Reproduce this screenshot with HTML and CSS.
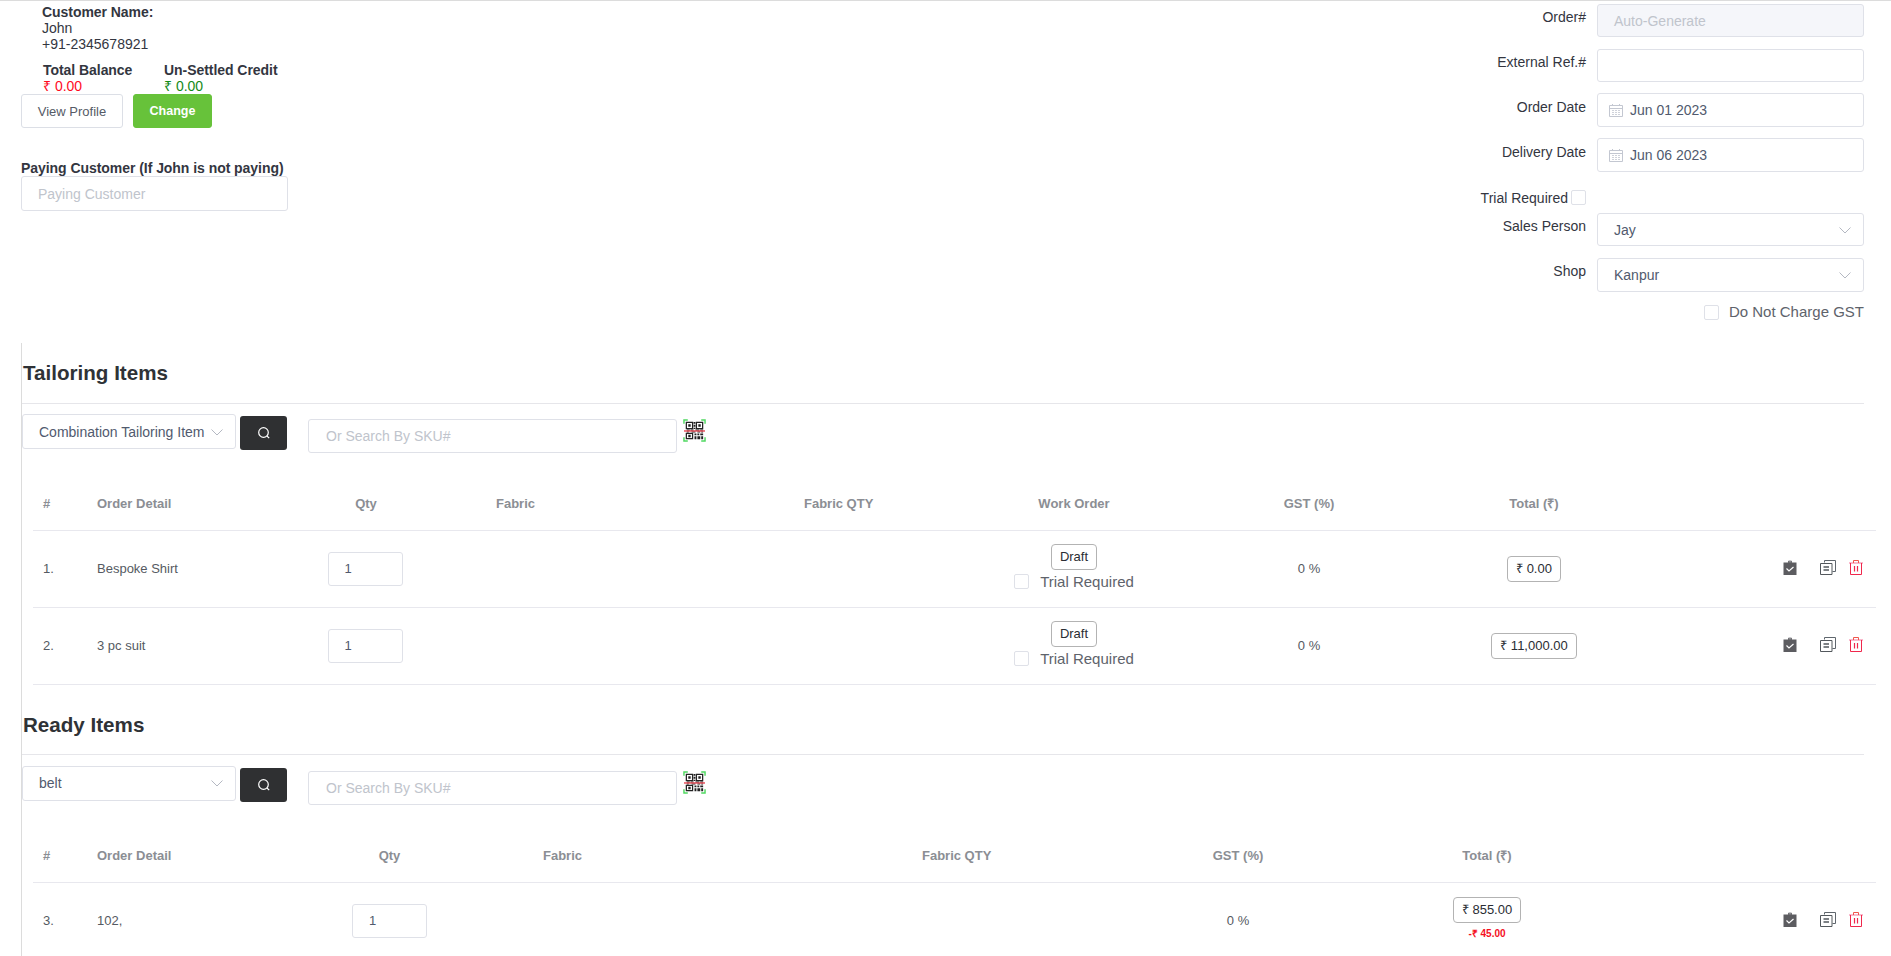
FILE: index.html
```html
<!DOCTYPE html>
<html lang="en">
<head>
<meta charset="utf-8">
<title>Order</title>
<link rel="stylesheet" href="styles.css">
</head>
<body>
<svg class="defs" width="0" height="0" aria-hidden="true">
  <symbol id="i-chev" viewBox="0 0 12 7"><path d="M.5.5 6 6l5.500-5.500" fill="none" stroke="currentColor"/></symbol>
  <symbol id="i-cal" viewBox="0 0 14 13"><path d="M.5 1.500h13v11H.5zM.5 4.500h13" fill="none" stroke="#c3c7d1"/><path d="M3.500 0v2M10.500 0v2" stroke="#c3c7d1"/><path d="M3 6.500h8M3 8.500h8M3 10.500h8" stroke="#cfd2da" stroke-dasharray="2 1"/></symbol>
  <symbol id="i-search" viewBox="0 0 14 14"><circle cx="6.500" cy="6.500" r="4.800" fill="none" stroke="currentColor" stroke-width="1.200"/><path d="m10 10 2.200 2.200" stroke="currentColor" stroke-width="1.200"/></symbol>
  <symbol id="i-qr" viewBox="0 0 24 24">
    <path d="M1 5V1h4M19 1h4v4M1 19v4h4M23 19v4h-4" fill="none" stroke="#4fd860" stroke-width="1.500"/>
    <path d="M3.500 3.500h6.500v6.500H3.500zM14 3.500h6.500v6.500H14zM3.500 15h6.500v5.500H3.500z" fill="none" stroke="#222" stroke-width="1.300"/>
    <path d="M5.500 5.500h2.500V8H5.500zM16 5.500h2.500V8H16zM5.500 16.500h2.500V19H5.500zM11 3h2v2h-2zM11 6h2v2h-2zM11 9h2v1.500h-2zM4 11h3v1H4zM8 11h3v1H8zM13 11h4v1h-4zM18 11h3v1h-3zM4 13h2v1H4zM9 13h4v1H9zM15 13h3v1h-3zM19 13h2v1h-2zM12 15h2v2h-2zM15 15h2v2h-2zM18 15h3v2h-3zM12 18h2v3h-2zM15 18h3v3h-3zM19 18h2v3h-2z" fill="#222"/>
    <path d="M1 12.500h22" stroke="#e0303c" stroke-width="1.300"/>
  </symbol>
  <symbol id="i-check" viewBox="0 0 14 15"><path d="M5 1h4v1.500h4.500V15H.5V2.500H5z" fill="#5c5c60"/><path d="M5.500.5h3v2h-3z" fill="#8b8b8f"/><path d="m3.500 8.500 2.500 2.500 4.500-4" fill="none" stroke="#fff" stroke-width="1.200"/></symbol>
  <symbol id="i-copy" viewBox="0 0 16 15"><path d="M4.500 2.500V.5h11v11h-3" fill="none" stroke="#5f666d"/><path d="M.5 3.500h11.500v11H.5z" fill="#fff" stroke="#53585d"/><path d="M3.500 7h5.500M3.500 10h5.500" stroke="#53585d" stroke-width="1.300"/></symbol>
  <symbol id="i-trash" viewBox="0 0 14 15"><path d="M0 3h14" stroke="#f4749a"/><path d="M4.500 3V.5h5V3" fill="none" stroke="#f0564c"/><path d="M1.500 3v11.500h11V3" fill="none" stroke="#f0274c"/><path d="M5.500 6v5.500M8.500 6v5.500" stroke="#f0274c" stroke-width="1.200"/></symbol>
</svg>

<div class="page">
  <header class="top">
    <section class="customer">
      <div class="cust-info">
        <strong>Customer Name:</strong>
        <div>John</div>
        <div>+91-2345678921</div>
      </div>
      <div class="balances">
        <div class="bal bal-total"><strong>Total Balance</strong><div class="neg">₹ 0.00</div></div>
        <div class="bal"><strong>Un-Settled Credit</strong><div class="pos">₹ 0.00</div></div>
      </div>
      <div class="cust-actions">
        <button class="btn btn-outline" type="button">View Profile</button>
        <button class="btn btn-green" type="button">Change</button>
      </div>
      <label class="payer-label">Paying Customer (If John is not paying)</label>
      <div class="field payer-field"><span class="ph">Paying Customer</span></div>
    </section>

    <section class="order-form">
      <div class="form-row r-order"><label>Order#</label><div class="field disabled"><span class="ph">Auto-Generate</span></div></div>
      <div class="form-row r-ext"><label>External Ref.#</label><div class="field"></div></div>
      <div class="form-row r-date"><label>Order Date</label><div class="field date"><svg class="cal"><use href="#i-cal"/></svg>Jun 01 2023</div></div>
      <div class="form-row r-date2"><label>Delivery Date</label><div class="field date"><svg class="cal"><use href="#i-cal"/></svg>Jun 06 2023</div></div>
      <div class="trial-row"><span>Trial Required</span><span class="check"></span></div>
      <div class="form-row r-sales"><label>Sales Person</label><div class="field select">Jay<svg class="chev"><use href="#i-chev"/></svg></div></div>
      <div class="form-row r-shop"><label>Shop</label><div class="field select tall">Kanpur<svg class="chev"><use href="#i-chev"/></svg></div></div>
      <div class="gst-row"><span class="check"></span><span>Do Not Charge GST</span></div>
    </section>
  </header>

  <main class="items">
    <section class="item-section">
      <h3>Tailoring Items</h3>
      <div class="toolbar">
        <div class="field select picker picker-long">Combination Tailoring Item<svg class="chev"><use href="#i-chev"/></svg></div>
        <button class="btn-search" type="button" aria-label="Search"><svg><use href="#i-search"/></svg></button>
        <div class="field sku"><span class="ph">Or Search By SKU#</span></div>
        <svg class="qr"><use href="#i-qr"/></svg>
      </div>
      <table class="grid grid-tailor">
        <colgroup><col class="c-num"><col class="c-detail"><col class="c-qty"><col class="c-fabric"><col class="c-fqty"><col class="c-wo"><col class="c-gst"><col class="c-total"><col class="c-act"></colgroup>
        <thead><tr><th class="left">#</th><th class="left">Order Detail</th><th>Qty</th><th class="left">Fabric</th><th class="left">Fabric QTY</th><th>Work Order</th><th>GST (%)</th><th>Total (₹)</th><th></th></tr></thead>
        <tbody>
          <tr>
            <td class="left num">1.</td><td class="left">Bespoke Shirt</td>
            <td><div class="qty">1</div></td><td></td><td></td>
            <td class="wo"><span class="tag">Draft</span><div class="wo-trial"><span class="check"></span><span>Trial Required</span></div></td>
            <td>0 %</td><td><span class="tag">₹ 0.00</span></td>
            <td class="acts"><svg class="ic-check"><use href="#i-check"/></svg><svg class="ic-copy"><use href="#i-copy"/></svg><svg class="ic-trash"><use href="#i-trash"/></svg></td>
          </tr>
          <tr>
            <td class="left num">2.</td><td class="left">3 pc suit</td>
            <td><div class="qty">1</div></td><td></td><td></td>
            <td class="wo"><span class="tag">Draft</span><div class="wo-trial"><span class="check"></span><span>Trial Required</span></div></td>
            <td>0 %</td><td><span class="tag">₹ 11,000.00</span></td>
            <td class="acts"><svg class="ic-check"><use href="#i-check"/></svg><svg class="ic-copy"><use href="#i-copy"/></svg><svg class="ic-trash"><use href="#i-trash"/></svg></td>
          </tr>
        </tbody>
      </table>
    </section>

    <section class="item-section second">
      <h3>Ready Items</h3>
      <div class="toolbar">
        <div class="field select picker">belt<svg class="chev"><use href="#i-chev"/></svg></div>
        <button class="btn-search" type="button" aria-label="Search"><svg><use href="#i-search"/></svg></button>
        <div class="field sku"><span class="ph">Or Search By SKU#</span></div>
        <svg class="qr"><use href="#i-qr"/></svg>
      </div>
      <table class="grid grid-ready">
        <colgroup><col class="c-num"><col class="c-detail"><col class="c-qty"><col class="c-fabric"><col class="c-fqty"><col class="c-gst"><col class="c-total"><col class="c-act"></colgroup>
        <thead><tr><th class="left">#</th><th class="left">Order Detail</th><th>Qty</th><th class="left">Fabric</th><th class="left">Fabric QTY</th><th>GST (%)</th><th>Total (₹)</th><th></th></tr></thead>
        <tbody>
          <tr>
            <td class="left num">3.</td><td class="left">102,</td>
            <td><div class="qty">1</div></td><td></td><td></td>
            <td>0 %</td>
            <td class="total-disc"><span class="tag">₹ 855.00</span><div class="discount">-₹ 45.00</div></td>
            <td class="acts"><svg class="ic-check"><use href="#i-check"/></svg><svg class="ic-copy"><use href="#i-copy"/></svg><svg class="ic-trash"><use href="#i-trash"/></svg></td>
          </tr>
        </tbody>
      </table>
    </section>
  </main>
</div>
</body>
</html>
```

FILE: styles.css
```css
* { box-sizing: border-box; }
html, body { margin: 0; padding: 0; overflow: hidden; }
body {
  font-family: "Liberation Sans", Arial, sans-serif;
  font-size: 14px;
  line-height: 16px;
  color: #33363f;
  background: #fff;
}
.defs { position: absolute; }
.page { border-top: 1px solid #dcdcdc; height: 956px; overflow: hidden; }

.top { display: flex; justify-content: space-between; height: 342px; }
strong, .payer-label { letter-spacing: -0.05px; }

/* customer */
.customer { padding-left: 21px; width: 320px; }
.cust-info { padding: 3px 0 0 21px; }
.cust-info strong { display: block; }
.balances { display: flex; padding: 10px 0 0 22px; height: 42px; }
.bal-total { width: 121px; }
.neg { color: #ff0a1e; }
.pos { color: #138a17; }
.cust-actions { display: flex; gap: 10px; }
.btn {
  height: 34px;
  border-radius: 3px;
  font: 13px "Liberation Sans", Arial, sans-serif;
  padding: 0;
}
.btn-outline { width: 102px; background: #fff; border: 1px solid #dcdfe6; color: #555b66; }
.btn-green { width: 79px; background: #67c23a; border: 1px solid #67c23a; color: #fff; font-weight: bold; font-size: 12.500px; }
.payer-label { display: block; margin-top: 32px; font-weight: bold; }
.payer-field { width: 267px; height: 35px; }

/* fields */
.field {
  display: flex;
  align-items: center;
  border: 1px solid #dfe1e8;
  border-radius: 3px;
  background: #fff;
  padding-left: 16px;
  color: #515a6e;
  position: relative;
}
.ph { color: #c0c4cc; }
.disabled { background: #f5f6fa; }
.select .chev { position: absolute; right: 12px; top: 50%; margin-top: -3px; width: 12px; height: 7px; color: #b4b8c2; }

/* order form */
.order-form { width: 460px; margin-right: 27px; padding-top: 3px; }
.form-row { display: flex; justify-content: flex-end; gap: 11px; }
.form-row label { padding-top: 5px; text-align: right; white-space: nowrap; }
.form-row .field { width: 267px; height: 33px; flex: none; }
.r-order { margin-bottom: 12px; }
.r-ext { margin-bottom: 11px; }
.r-date { margin-bottom: 11px; }
.r-date .field, .r-date2 .field { height: 34px; }
.r-date label, .r-date2 label { padding-top: 6px; }
.date { padding-left: 11px; }
.cal { width: 14px; height: 13px; margin-right: 7px; flex: none; }
.trial-row {
  display: flex;
  align-items: center;
  justify-content: flex-end;
  gap: 3px;
  height: 15px;
  margin: 18px 278px 8px 0;
  white-space: nowrap;
}
.r-sales { margin-bottom: 12px; }
.tall.field { height: 34px; }
.gst-row {
  display: flex;
  align-items: center;
  justify-content: flex-end;
  gap: 10px;
  margin-top: 12px;
  font-size: 15px;
  color: #5e636b;
}
.check {
  display: inline-block;
  flex: none;
  width: 15px;
  height: 15px;
  border: 1px solid #dfe1e8;
  border-radius: 2px;
  background: #fff;
}

/* items */
.items { margin-left: 21px; width: 1843px; border-left: 1px solid #dcdcdc; }
.item-section h3 {
  margin: 0;
  height: 61px;
  line-height: 60px;
  padding-left: 1px;
  font-size: 20.600px;
  font-weight: bold;
  color: #2f3236;
  border-bottom: 1px solid #e6e6ea;
}
.item-section.second h3 { line-height: 62px; }
.second { margin-top: 9px; }
.toolbar { display: flex; align-items: flex-start; height: 74px; padding-top: 10px; }
.second .toolbar { height: 76px; padding-top: 11px; }
.picker { width: 214px; height: 35px; padding-left: 16px; font-size: 14px; white-space: nowrap; }
.btn-search {
  width: 47px; height: 34px; margin: 2px 0 0 4px;
  background: #2f3032; border: 0; border-radius: 3px; color: #fff; padding: 0;
  display: flex; align-items: center; justify-content: center;
}
.btn-search svg { width: 14px; height: 14px; }
.sku { width: 369px; height: 34px; margin: 5px 0 0 21px; padding-left: 17px; }
.qr { width: 23px; height: 23px; margin: 5px 0 0 6px; }

.grid {
  table-layout: fixed;
  width: 1843px;
  margin-left: 11px;
  border-collapse: collapse;
  font-size: 13px;
}
.grid th {
  height: 52px;
  font-weight: bold;
  color: #8b8e94;
  text-align: center;
  padding: 0 10px;
  border-bottom: 1px solid #e8e8ee;
  white-space: nowrap;
}
.grid td {
  height: 77px;
  text-align: center;
  padding: 0 10px;
  border-bottom: 1px solid #e8e8ee;
  color: #555a62;
}
.grid .left { text-align: left; }
.num { font-size: 13px; }

.c-num { width: 54px; }
.grid-tailor .c-detail { width: 159px; }
.grid-tailor .c-qty { width: 240px; }
.grid-tailor .c-fabric { width: 308px; }
.grid-tailor .c-fqty { width: 176px; }
.grid-tailor .c-wo { width: 208px; }
.grid-tailor .c-gst { width: 262px; }
.grid-tailor .c-total { width: 188px; }
.grid-tailor .c-act { width: 248px; }
.grid-ready .c-detail { width: 159px; }
.grid-ready .c-qty { width: 287px; }
.grid-ready .c-fabric { width: 379px; }
.grid-ready .c-fqty { width: 176px; }
.grid-ready .c-gst { width: 300px; }
.grid-ready .c-total { width: 198px; }
.grid-ready .c-act { width: 290px; }

.qty {
  width: 75px; height: 34px; margin: 0 auto;
  display: flex; align-items: center; padding-left: 16px;
  border: 1px solid #dfe1e8; border-radius: 3px;
  font-size: 13px; color: #515a6e;
}
.grid-tailor .qty { margin-left: calc(50% - 38.500px); }
.tag {
  display: inline-block;
  height: 26px;
  line-height: 24px;
  padding: 0 8px;
  border: 1px solid #b3b3b3;
  border-radius: 4px;
  color: #2a2d33;
  font-size: 13px;
}
.grid td.wo { padding-bottom: 4px; }
.wo-trial {
  display: flex; align-items: center; justify-content: center; gap: 11px;
  margin-top: 4px; font-size: 15px; color: #5e636b;
}
.grid td.total-disc { padding-bottom: 6px; }
.discount { font-size: 10px; font-weight: bold; color: #f5101e; margin-top: 5px; line-height: 12px; }
.grid td.acts { text-align: right; padding: 0 13px 4px 0; }
.acts svg { vertical-align: middle; }
.ic-check { width: 14px; height: 15px; margin-right: 23px; }
.ic-copy { width: 16px; height: 15px; margin-right: 13px; }
.ic-trash { width: 14px; height: 15px; }
```
